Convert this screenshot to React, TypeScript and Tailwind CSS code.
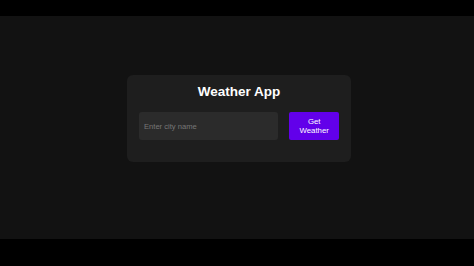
export default function App() {
  return (
    <div className="w-[474px] h-[266px] flex flex-col bg-black font-['Liberation_Sans',Arial,sans-serif]">
      <div className="h-[16px] bg-black" />
      <main className="h-[223px] bg-[#121212] flex justify-center pt-[59px] pl-[4px]">
        <div className="w-[224px] h-[87px] bg-[#1e1e1e] rounded-[6px] px-[12px] pt-[9px] flex flex-col">
          <h1 className="text-white text-[13.5px] leading-[16px] font-bold text-center">Weather App</h1>
          <div className="mt-[12px] flex gap-[11px]">
            <input
              type="text"
              placeholder="Enter city name"
              className="w-[141px] h-[28px] bg-[#2b2b2b] rounded-[3px] px-[5px] text-[7.6px] text-white placeholder:text-[#777777] outline-none"
            />
            <button className="w-[50px] h-[28px] bg-[#6200ea] rounded-[2px] px-[8px] text-white text-[7.8px] leading-[9px]">
              Get Weather
            </button>
          </div>
        </div>
      </main>
      <div className="flex-1 bg-black" />
    </div>
  );
}
